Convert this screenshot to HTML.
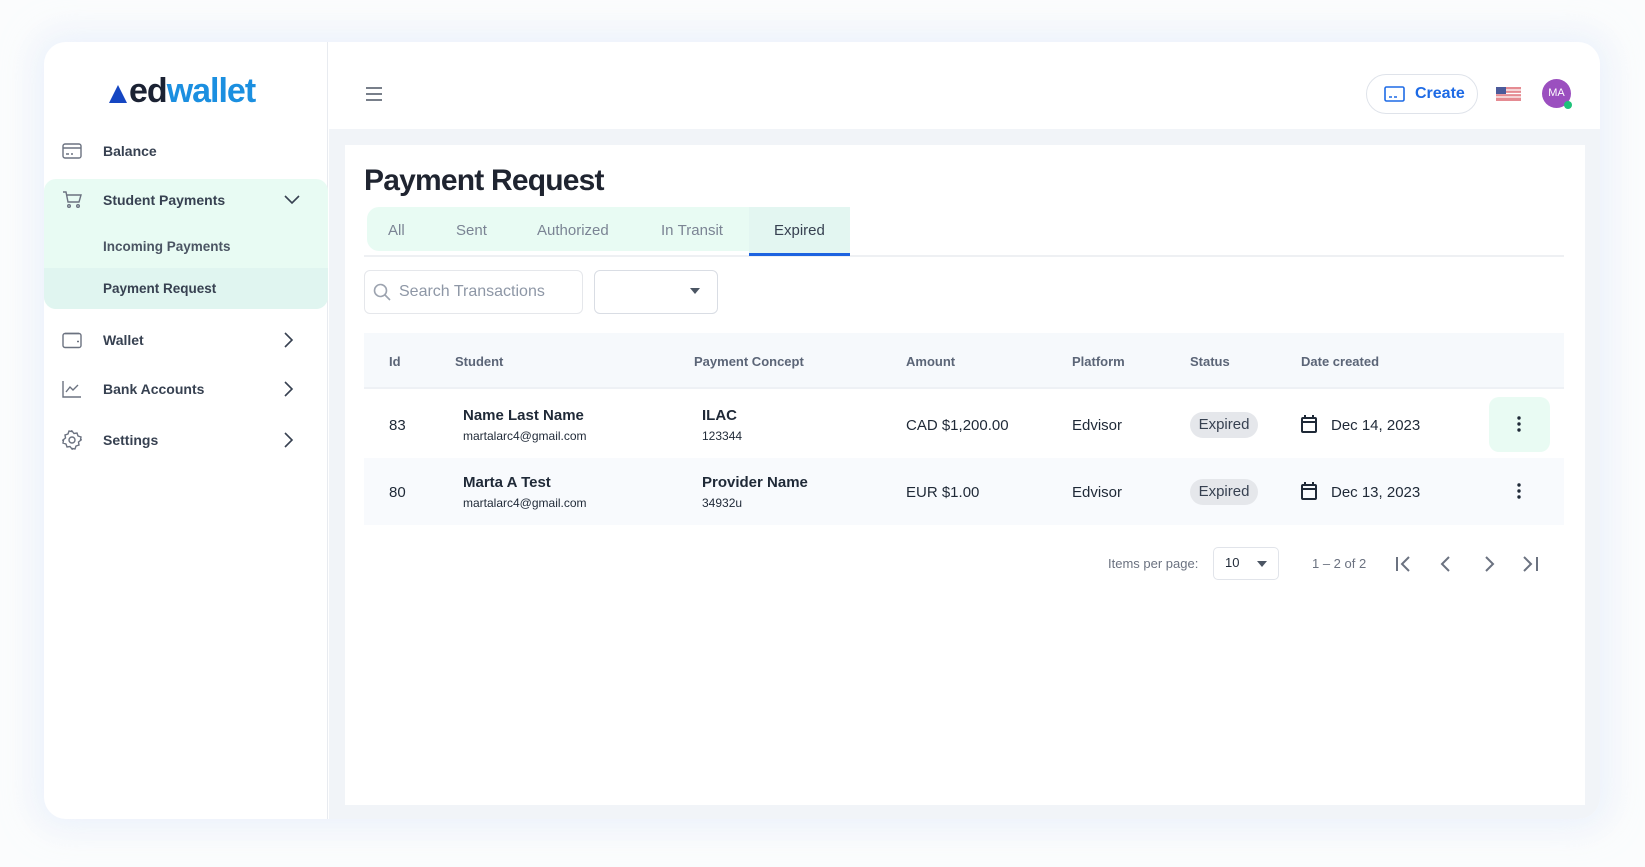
<!DOCTYPE html>
<html><head><meta charset="utf-8"><style>
*{box-sizing:border-box;margin:0;padding:0}
body{width:1645px;height:867px;background:#fbfcfd;font-family:"Liberation Sans",sans-serif;color:#1f2937;position:relative;overflow:hidden}
.card{position:absolute;left:44px;top:42px;width:1556px;height:777px;background:#fff;border-radius:22px;box-shadow:0 0 30px 12px rgba(225,235,250,.55);overflow:hidden}
.abs{position:absolute}
.side{left:0;top:0;width:284px;height:100%;border-right:1px solid #e8ebf0}
.nav{position:absolute;left:0;width:284px;height:40px;display:flex;align-items:center;font-size:14px;font-weight:bold;color:#374151}
.nav .ic{position:absolute;left:18px;top:50%;transform:translateY(-50%)}
.nav .tx{position:absolute;left:59px}
.nav .ch{position:absolute;left:240px;top:50%;transform:translateY(-50%)}
.main{left:285px;top:87px;right:0;bottom:0;background:#f1f4f8}
.panel{left:301px;top:103px;width:1240px;height:660px;background:#fff}
.th{position:absolute;top:312px;font-size:13px;font-weight:bold;color:#5b6577}
.cell{position:absolute;font-size:15px;color:#1f2937;white-space:nowrap}
.pill{position:absolute;width:68px;height:26px;border-radius:13px;background:#e5e7eb;font-size:15px;color:#374151;text-align:center;line-height:26px}
</style></head><body>
<div class="card">
  <div class="abs side">
    <div class="abs" style="left:65px;top:28px;font-size:34px;font-weight:bold;letter-spacing:-1px;line-height:42px;white-space:nowrap">
      <svg width="18" height="18" viewBox="0 0 18 18" style="vertical-align:-1px;margin-right:2px"><path d="M9 0L18 18H0z" fill="#1546c2"/></svg><span style="color:#1b2233">ed</span><span style="color:#1b8fe0">wallet</span>
    </div>
    <div class="nav" style="top:89px"><svg class="ic" width="20" height="16" viewBox="0 0 20 16" fill="none" stroke="#6b7280" stroke-width="1.4"><rect x="1" y="1" width="18" height="14" rx="2"/><path d="M1 5h18M4 11h3M9 11h2"/></svg><span class="tx">Balance</span></div>
    <div class="abs" style="left:0;top:137px;width:284px;height:130px;background:#e8fbf3;border-radius:12px"></div>
    <div class="abs" style="left:0;top:226px;width:284px;height:41px;background:#e0f5f0;border-radius:0 0 12px 12px"></div>
    <div class="nav" style="top:138px"><svg class="ic" width="20" height="18" viewBox="0 0 20 18" fill="none" stroke="#6b7280" stroke-width="1.4"><path d="M1 1h3l2 10h11l2-7H5"/><circle cx="7" cy="15" r="1.3"/><circle cx="16" cy="15" r="1.3"/></svg><span class="tx">Student Payments</span><svg class="ch" width="16" height="10" viewBox="0 0 16 10" fill="none" stroke="#374151" stroke-width="1.6"><path d="M1 1l7 7 7-7"/></svg></div>
    <div class="nav" style="top:184px;font-weight:bold;color:#4b5563;font-size:13.5px"><span class="tx">Incoming Payments</span></div>
    <div class="nav" style="top:226px;font-size:13.5px"><span class="tx">Payment Request</span></div>
    <div class="nav" style="top:278px"><svg class="ic" width="20" height="17" viewBox="0 0 20 17" fill="none" stroke="#6b7280" stroke-width="1.4"><rect x="1" y="2" width="18" height="14" rx="2"/><path d="M3 2h14M15 10h2"/></svg><span class="tx">Wallet</span><svg class="ch" width="10" height="16" viewBox="0 0 10 16" fill="none" stroke="#374151" stroke-width="1.6"><path d="M1 1l7 7-7 7"/></svg></div>
    <div class="nav" style="top:327px"><svg class="ic" width="20" height="18" viewBox="0 0 20 18" fill="none" stroke="#6b7280" stroke-width="1.4"><path d="M1 1v16h18M4 12l4-5 3 3 5-5"/></svg><span class="tx">Bank Accounts</span><svg class="ch" width="10" height="16" viewBox="0 0 10 16" fill="none" stroke="#374151" stroke-width="1.6"><path d="M1 1l7 7-7 7"/></svg></div>
    <div class="nav" style="top:378px"><svg class="ic" width="20" height="20" viewBox="0 0 20 20" fill="none" stroke="#6b7280" stroke-width="1.4"><circle cx="10" cy="10" r="3"/><path d="M10 1l2 2.5 3-.5 1 3 3 1-.5 3L19 10l-2.5 2 .5 3-3 1-1 3-3-.5L10 19l-2-2.5-3 .5-1-3-3-1 .5-3L1 10l2.5-2L3 5l3-1 1-3 3 .5z"/></svg><span class="tx">Settings</span><svg class="ch" width="10" height="16" viewBox="0 0 10 16" fill="none" stroke="#374151" stroke-width="1.6"><path d="M1 1l7 7-7 7"/></svg></div>
  </div>
  <div class="abs main"></div>
  <svg class="abs" style="left:322px;top:45px" width="16" height="14" viewBox="0 0 16 14" stroke="#4b5563" stroke-width="1.6"><path d="M0 1h16M0 7h16M0 13h16"/></svg>
  <div class="abs" style="left:1322px;top:32px;width:112px;height:40px;border:1.5px solid #dfe3ea;border-radius:20px;display:flex;align-items:center;padding-left:17px;color:#1d6ae5;font-size:16px;font-weight:bold">
    <svg width="21" height="16" viewBox="0 0 21 16" fill="none" stroke="#1d6ae5" stroke-width="1.6" style="margin-right:10px"><rect x="1" y="1" width="19" height="14" rx="1.5"/><path d="M5 11h3M10 11h3"/></svg>Create</div>
  <svg class="abs" style="left:1452px;top:45px" width="25" height="14" viewBox="0 0 25 14"><rect width="25" height="14" fill="#e58b92"/><path d="M0 3h25M0 6.5h25M0 10h25" stroke="#fff" stroke-width="1.2"/><rect width="10" height="7" fill="#4b5a9a"/></svg>
  <div class="abs" style="left:1498px;top:37px;width:29px;height:29px;border-radius:50%;background:#9b4fbf;color:#fff;font-size:11px;text-align:center;line-height:29px">MA</div>
  <div class="abs" style="left:1520px;top:59px;width:8px;height:8px;border-radius:50%;background:#1ec27a"></div>
  <div class="abs panel"></div>
  <div class="abs" style="left:320px;top:122px;font-size:30px;font-weight:bold;color:#1f2430;letter-spacing:-.8px">Payment Request</div>
  <div class="abs" style="left:323px;top:165px;width:478px;height:44px;background:#e8fbf3;border-radius:12px"></div>
  <div class="abs" style="left:705px;top:165px;width:101px;height:48px;background:#e3f6f1"></div>
  <div class="abs" style="left:320px;top:213px;width:1200px;height:2px;background:#eef0f3"></div>
  <div class="abs" style="left:705px;top:211px;width:101px;height:3px;background:#1d63e0"></div>
  <div class="abs" style="top:180px;left:0;font-size:15px;color:#7b8494;white-space:nowrap">
    <span class="abs" style="left:344px">All</span><span class="abs" style="left:412px">Sent</span><span class="abs" style="left:493px">Authorized</span><span class="abs" style="left:617px">In&nbsp;Transit</span><span class="abs" style="left:730px;color:#374151">Expired</span></div>
  <div class="abs" style="left:320px;top:228px;width:219px;height:44px;border:1px solid #e5e7eb;border-radius:6px"></div>
  <svg class="abs" style="left:329px;top:241px" width="18" height="18" viewBox="0 0 18 18" fill="none" stroke="#9ca3af" stroke-width="1.6"><circle cx="7.5" cy="7.5" r="6"/><path d="M12 12l5 5"/></svg>
  <div class="abs" style="left:355px;top:241px;font-size:16px;color:#8e97a6">Search Transactions</div>
  <div class="abs" style="left:550px;top:228px;width:124px;height:44px;border:1.5px solid #d9dde4;border-radius:6px"></div>
  <svg class="abs" style="left:646px;top:246px" width="10" height="6"><path d="M0 0h10L5 6z" fill="#4b5563"/></svg>
  <div class="abs" style="left:320px;top:291px;width:1200px;height:56px;background:#f6f9fc;border-bottom:2px solid #eef1f5"></div>
  <div class="th" style="left:345px">Id</div><div class="th" style="left:411px">Student</div><div class="th" style="left:650px">Payment Concept</div><div class="th" style="left:862px">Amount</div><div class="th" style="left:1028px">Platform</div><div class="th" style="left:1146px">Status</div><div class="th" style="left:1257px">Date created</div>
  <div class="abs" style="left:320px;top:416px;width:1200px;height:67px;background:#f8fafd"></div>
  <div class="cell" style="left:345px;top:375px">83</div>
  <div class="cell" style="left:419px;top:365px;font-weight:bold">Name Last Name</div>
  <div class="cell" style="left:419px;top:387px;font-size:12px">martalarc4@gmail.com</div>
  <div class="cell" style="left:658px;top:365px;font-weight:bold">ILAC</div>
  <div class="cell" style="left:658px;top:387px;font-size:12px">123344</div>
  <div class="cell" style="left:862px;top:375px">CAD $1,200.00</div>
  <div class="cell" style="left:1028px;top:375px">Edvisor</div>
  <div class="pill" style="left:1146px;top:370px">Expired</div>
  <svg class="abs" style="left:1257px;top:373px" width="16" height="18" viewBox="0 0 16 18" fill="none" stroke="#1f2937" stroke-width="2"><rect x="1" y="3" width="14" height="14" rx="1"/><path d="M1 7h14M4 0v4M12 0v4"/></svg>
  <div class="cell" style="left:1287px;top:375px">Dec 14, 2023</div>
  <div class="abs" style="left:1445px;top:355px;width:61px;height:55px;background:#e9fbf3;border-radius:10px"></div>
  <svg class="abs" style="left:1473px;top:374px" width="4" height="16"><circle cx="2" cy="2" r="1.7" fill="#1f2937"/><circle cx="2" cy="8" r="1.7" fill="#1f2937"/><circle cx="2" cy="14" r="1.7" fill="#1f2937"/></svg>
  <div class="cell" style="left:345px;top:442px">80</div>
  <div class="cell" style="left:419px;top:432px;font-weight:bold">Marta A Test</div>
  <div class="cell" style="left:419px;top:454px;font-size:12px">martalarc4@gmail.com</div>
  <div class="cell" style="left:658px;top:432px;font-weight:bold">Provider Name</div>
  <div class="cell" style="left:658px;top:454px;font-size:12px">34932u</div>
  <div class="cell" style="left:862px;top:442px">EUR $1.00</div>
  <div class="cell" style="left:1028px;top:442px">Edvisor</div>
  <div class="pill" style="left:1146px;top:437px">Expired</div>
  <svg class="abs" style="left:1257px;top:440px" width="16" height="18" viewBox="0 0 16 18" fill="none" stroke="#1f2937" stroke-width="2"><rect x="1" y="3" width="14" height="14" rx="1"/><path d="M1 7h14M4 0v4M12 0v4"/></svg>
  <div class="cell" style="left:1287px;top:442px">Dec 13, 2023</div>
  <svg class="abs" style="left:1473px;top:441px" width="4" height="16"><circle cx="2" cy="2" r="1.7" fill="#1f2937"/><circle cx="2" cy="8" r="1.7" fill="#1f2937"/><circle cx="2" cy="14" r="1.7" fill="#1f2937"/></svg>
  <div class="abs" style="left:1064px;top:514px;font-size:13px;color:#6b7280">Items per page:</div>
  <div class="abs" style="left:1169px;top:505px;width:66px;height:33px;border:1.5px solid #e1e4ea;border-radius:5px"></div>
  <div class="abs" style="left:1181px;top:513px;font-size:13px;color:#1f2937">10</div>
  <svg class="abs" style="left:1213px;top:519px" width="10" height="6"><path d="M0 0h10L5 6z" fill="#4b5563"/></svg>
  <div class="abs" style="left:1268px;top:514px;font-size:13px;color:#6b7280">1 – 2 of 2</div>
  <svg class="abs" style="left:1351px;top:513px" width="180" height="18" viewBox="0 0 180 18" fill="none" stroke="#6b7280" stroke-width="2"><path d="M2 2v14M14 2l-7 7 7 7M54 2l-7 7 7 7M91 2l7 7-7 7M129 2l7 7-7 7M142 2v14"/></svg>
</div>
</body></html>
